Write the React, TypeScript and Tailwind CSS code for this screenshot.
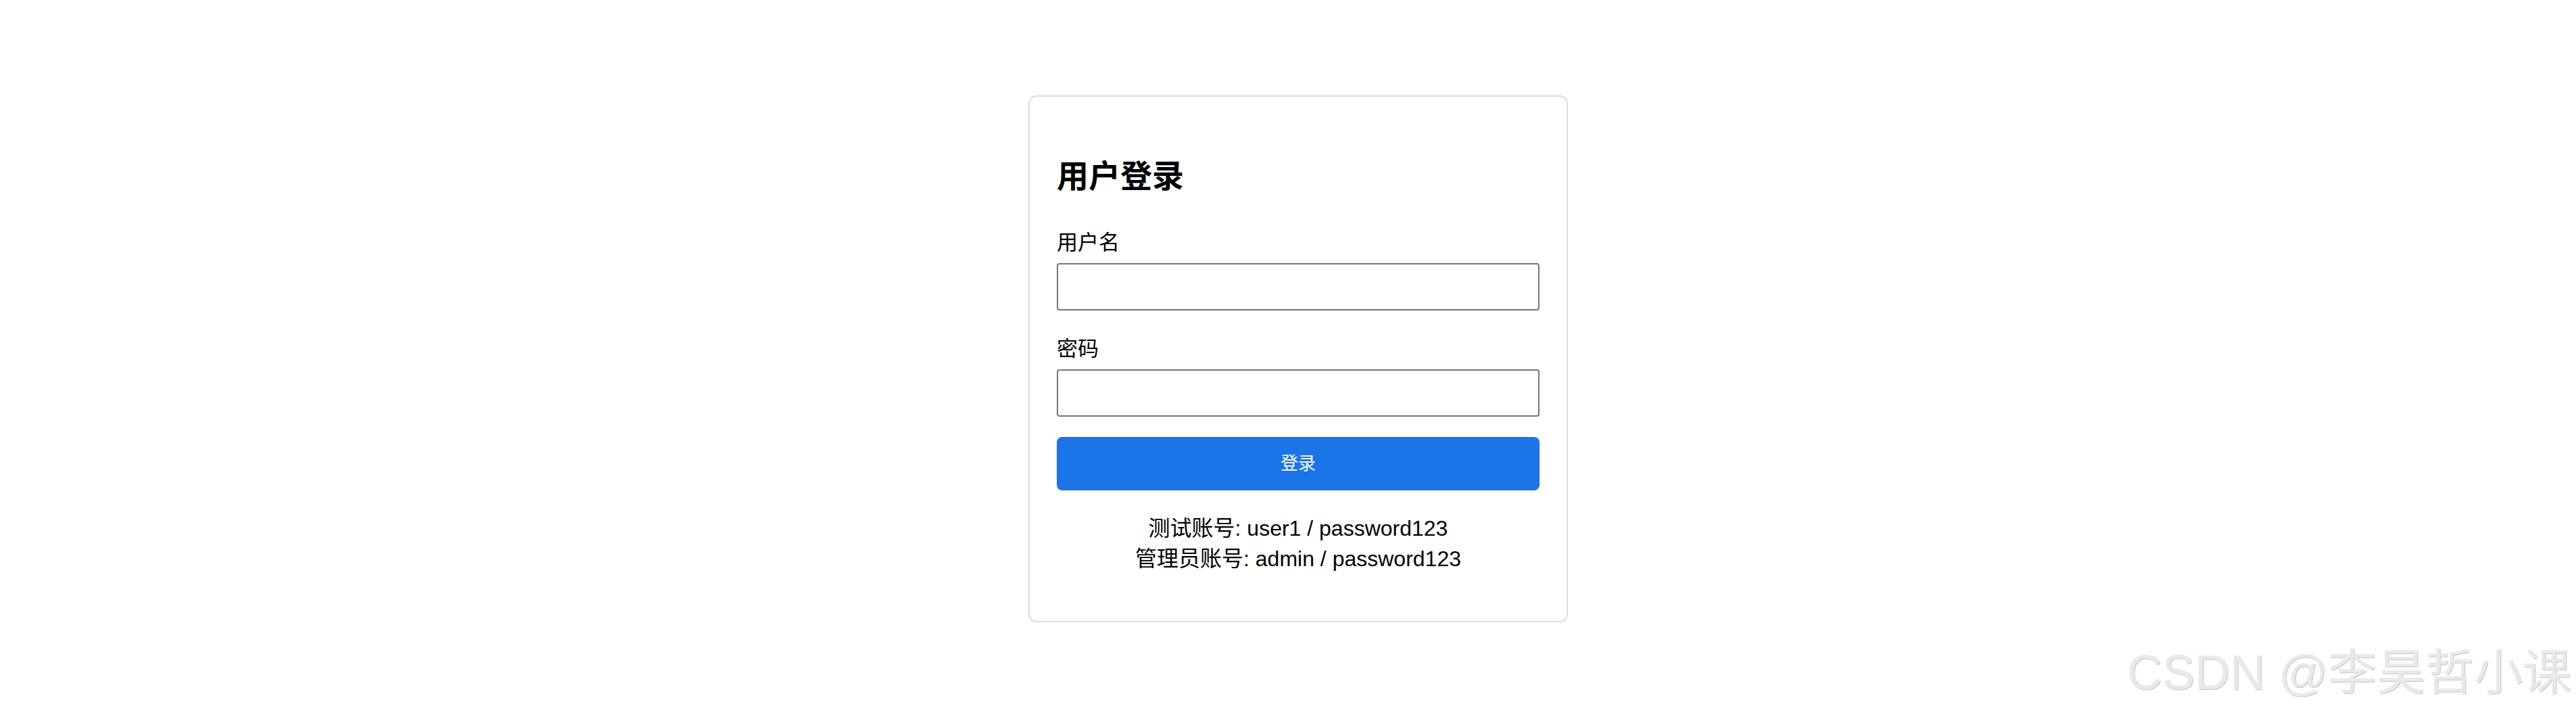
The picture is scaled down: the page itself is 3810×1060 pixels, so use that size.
export default function App() {
  return (
    <div className="relative min-h-[1060px] w-full bg-white font-['Liberation_Sans','Noto_Sans_CJK_SC',sans-serif] text-black">
      <div className="flex justify-center pl-[30px] pt-[141px]">
        {/* Login card */}
        <div className="w-[798px] rounded-[12px] border-2 border-[#dddddd] bg-white px-[40px] pt-[90px] pb-[69px]">
          <h2 className="text-[47px] font-bold leading-[56px]">用户登录</h2>

          <label className="mt-[52px] mb-[12px] block text-[31px] leading-[36px]">用户名</label>
          <input
            type="text"
            className="block h-[70px] w-full rounded-[4px] border-2 border-[#767676] bg-white px-3 text-[31px] outline-none"
          />

          <label className="mt-[39px] mb-[12px] block text-[31px] leading-[36px]">密码</label>
          <input
            type="password"
            className="block h-[70px] w-full rounded-[4px] border-2 border-[#767676] bg-white px-3 text-[31px] outline-none"
          />

          <button className="mt-[30px] flex h-[79px] w-full items-center justify-center rounded-[8px] bg-[#1b74e8] text-[26px] text-white">
            登录
          </button>

          <div className="mt-[34px] text-center text-[32px] leading-[45px]">
            <p>测试账号: user1 / password123</p>
            <p>管理员账号: admin / password123</p>
          </div>
        </div>
      </div>

      {/* Watermark */}
      <div className="absolute right-[7px] bottom-[30px] text-[72px] leading-[72px] text-[#e9e9e9] [text-shadow:1px_1px_1px_#c4c4c4,-1px_-1px_0_#ffffff]">
        CSDN @李昊哲小课
      </div>
    </div>
  );
}
